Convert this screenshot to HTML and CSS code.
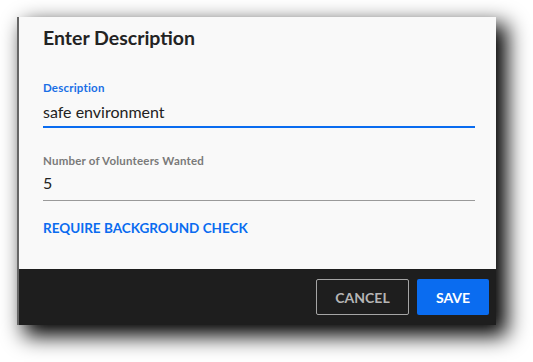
FILE: index.html
```html
<!DOCTYPE html>
<html>
<head>
<meta charset="utf-8">
<link rel="stylesheet" href="styles.css">
</head>
<body>
<div class="page">
  <div class="dialog">
    <div class="body">
      <h1 class="title">Enter Description</h1>
      <div class="field field-active">
        <div class="label label-active">Description</div>
        <div class="value">safe environment</div>
      </div>
      <div class="field field-plain">
        <div class="label">Number of Volunteers Wanted</div>
        <div class="value">5</div>
      </div>
      <div class="link">REQUIRE BACKGROUND CHECK</div>
    </div>
    <div class="footer">
      <button class="btn btn-cancel">CANCEL</button>
      <button class="btn btn-save">SAVE</button>
    </div>
  </div>
</div>
</body>
</html>
```

FILE: styles.css
```css
html, body {
  margin: 0;
  padding: 0;
  background: #ffffff;
}
.page {
  height: 362px;
  box-sizing: border-box;
  padding: 17px 0 0 17px;
  font-family: "Lato", "Liberation Sans", sans-serif;
}
.dialog {
  width: 477px;
  height: 308px;
  background: #f9f9f9;
  border-left: 2px solid #666666;
  box-shadow: 9px 9px 20px 2px rgba(0, 0, 0, 1);
  display: flex;
  flex-direction: column;
}
.body {
  flex: 1;
  padding: 9px 21px 0 24px;
}
.title {
  margin: 0;
  font-size: 19.5px;
  line-height: 24px;
  font-weight: 700;
  color: #232323;
}
.field-active {
  margin-top: 31px;
  border-bottom: 2px solid #0a6cf0;
}
.field-active .value {
  padding: 7px 0 4px;
}
.field-plain {
  margin-top: 26px;
  border-bottom: 1px solid #9a9a9a;
}
.field-plain .value {
  padding: 5px 0 7px;
}
.label {
  font-size: 11.5px;
  line-height: 14px;
  letter-spacing: 0.2px;
  font-weight: 700;
  color: #7a7a7a;
}
.label-active {
  color: #1a6fe6;
}
.value {
  font-size: 16px;
  line-height: 20px;
  color: #222222;
}
.link {
  margin-top: 19px;
  font-size: 13.5px;
  line-height: 16px;
  font-weight: 700;
  color: #0a6cf0;
}
.footer {
  height: 56px;
  box-sizing: border-box;
  background: #1e1e1e;
  display: flex;
  justify-content: flex-end;
  align-items: center;
  gap: 8px;
  padding: 0 7px 0 0;
}
.btn {
  height: 36px;
  padding: 0;
  font-family: "Lato", "Liberation Sans", sans-serif;
  font-size: 14px;
  font-weight: 700;
  border-radius: 2px;
  cursor: pointer;
}
.btn-cancel {
  width: 93px;
  background: transparent;
  border: 1px solid #a5a5a5;
  color: #b5b5b5;
}
.btn-save {
  width: 72px;
  background: #0a6cf0;
  border: none;
  color: #ffffff;
}
```
